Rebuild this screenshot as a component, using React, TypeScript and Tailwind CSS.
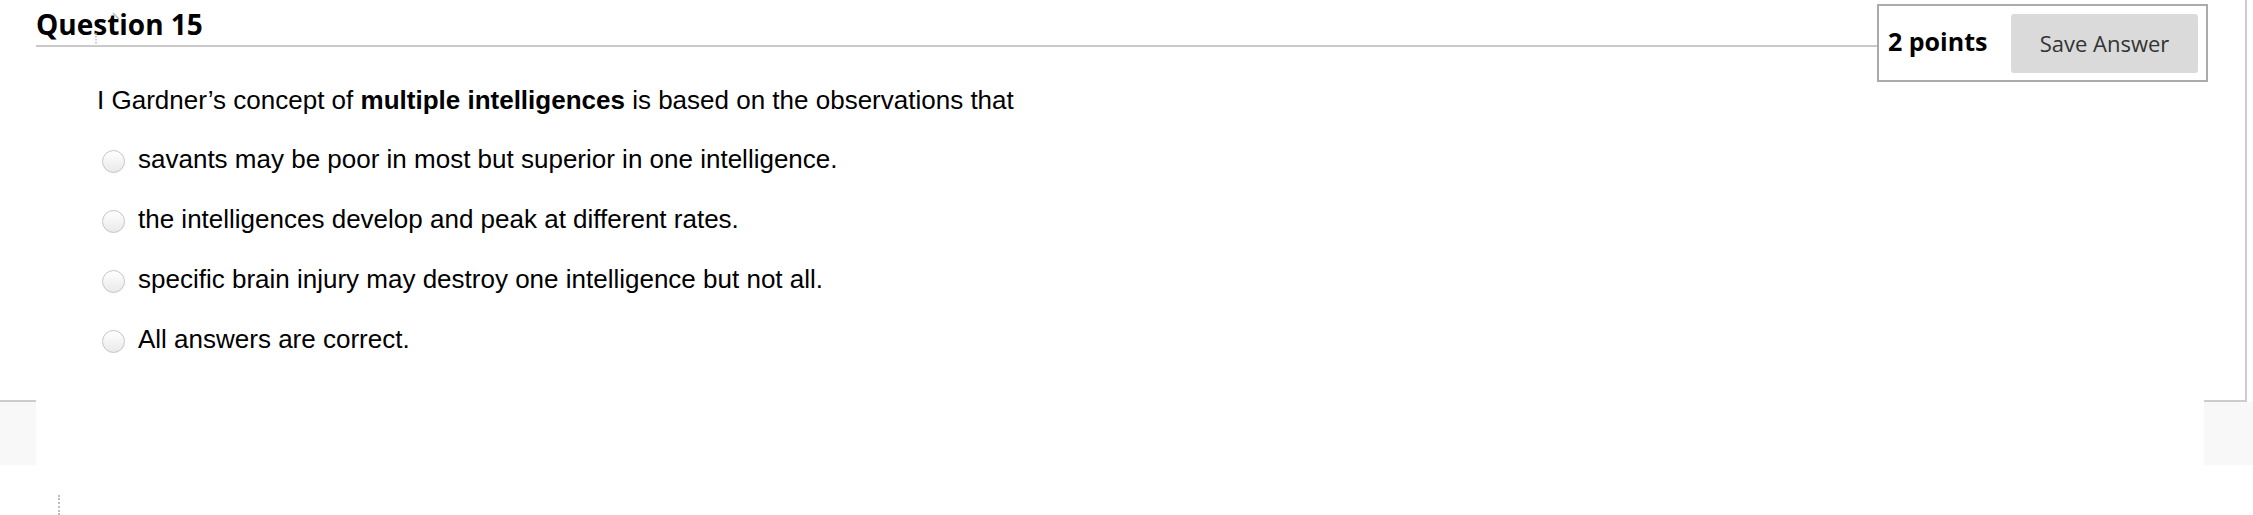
const OPTIONS = [
  "savants may be poor in most but superior in one intelligence.",
  "the intelligences develop and peak at different rates.",
  "specific brain injury may destroy one intelligence but not all.",
  "All answers are correct.",
];

const HEADING_FONT = { fontFamily: '"Open Sans", "Liberation Sans", sans-serif' };
const BODY_FONT = { fontFamily: '"Liberation Sans", Arial, sans-serif' };

function Radio() {
  return (
    <span className="mt-[5px] block h-[23px] w-[23px] shrink-0 rounded-full border border-[#c4c4c4] bg-gradient-to-b from-white to-[#e9e9e9] shadow-[inset_0_1px_1px_rgba(255,255,255,0.9)]" />
  );
}

function QuestionHeader() {
  return (
    <div className="relative -mr-[4px] flex items-start pt-[4px]">
      <div className="flex-1 border-b-2 border-[#c9c9c9] pt-[4px] pb-[5px]">
        <h2 className="text-[28px] leading-[32px] font-bold text-black" style={HEADING_FONT}>
          Question 15
        </h2>
      </div>
      <div className="flex h-[78px] w-[331px] items-center border-2 border-[#ababab] pl-[9px] pr-[8px]">
        <span className="mb-[3px] text-[25px] font-bold text-black" style={HEADING_FONT}>
          2 points
        </span>
        <button
          type="button"
          className="ml-auto h-[59px] w-[187px] rounded-[3px] bg-[#dadada] text-[22px] text-[#333]"
          style={HEADING_FONT}
        >
          Save Answer
        </button>
      </div>
      {/* faint cursor leftovers over the heading */}
      <svg className="pointer-events-none absolute left-[20px] top-0" width="70" height="50">
        <line x1="57" y1="13" x2="63" y2="19" stroke="#bdbdbd" strokeWidth="1.5" />
        <line x1="40" y1="33" x2="40" y2="44" stroke="#bbbbbb" strokeWidth="1.5" strokeDasharray="1.5 1.5" />
      </svg>
    </div>
  );
}

export default function App() {
  return (
    <div className="min-h-[515px] w-[2253px] bg-white">
      <div className="flex">
        <div className="flex w-[36px] shrink-0 flex-col">
          <div className="h-[402px] border-b-2 border-[#cccccc]" />
          <div className="h-[63px] bg-[#f8f8f8]" />
        </div>

        <section className="relative z-10 h-[465px] w-[2168px] shrink-0 bg-white">
          <QuestionHeader />
          <div className="pl-[61px] text-black" style={BODY_FONT}>
            <p className="mt-[3px] text-[26px] leading-[30px]">
              I Gardner’s concept of <strong>multiple intelligences</strong> is based on the observations that
            </p>
            <ul className="mt-[14px]">
              {OPTIONS.map((option) => (
                <li key={option} className="flex h-[60px] items-center">
                  <label className="ml-[5px] flex items-center gap-[13px]">
                    <Radio />
                    <span className="text-[26px] leading-[30px]">{option}</span>
                  </label>
                </li>
              ))}
            </ul>
          </div>
        </section>

        <div className="flex w-[49px] shrink-0 flex-col">
          <div className="h-[402px] w-[43px] border-r-2 border-b-2 border-[#cccccc]" />
          <div className="h-[63px] bg-[#f8f8f8]" />
        </div>
      </div>

      <div className="h-[50px] pt-[30px] pl-[58px]">
        <div className="h-[20px] border-l-2 border-dotted border-[#bdbdbd]" />
      </div>
    </div>
  );
}
